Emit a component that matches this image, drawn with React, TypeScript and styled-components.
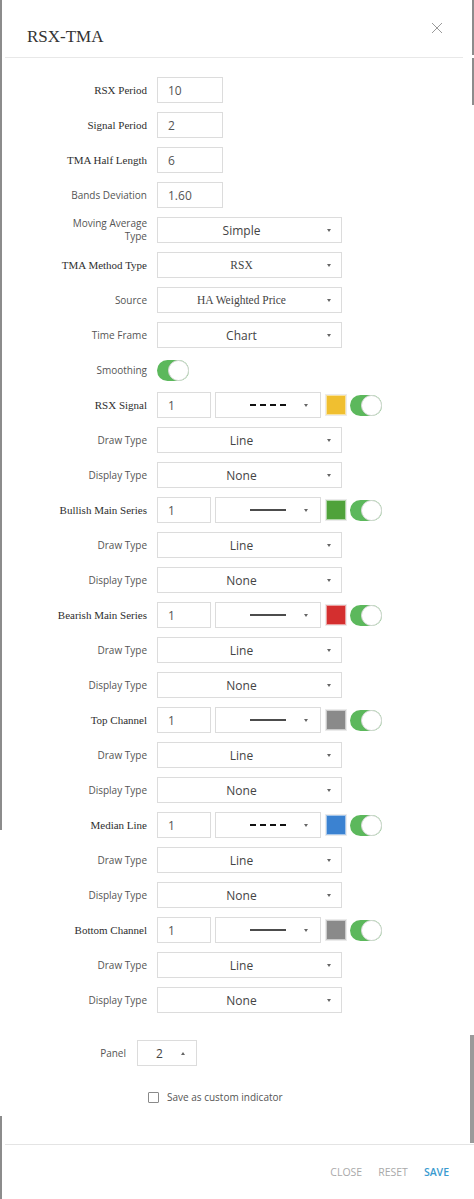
import React from "react";
import styled, { createGlobalStyle } from "styled-components";

const Global = createGlobalStyle`
  html, body { margin: 0; padding: 0; background: #fff; }
  * { box-sizing: border-box; }
`;

const Frame = styled.div`
  position: relative;
  width: 474px;
  height: 1199px;
  background: #fff;
  display: flex;
  flex-direction: column;
  overflow: hidden;
  font-family: "Open Sans", "Liberation Sans", sans-serif;
`;

const EdgeMark = styled.div<{ $side: "left" | "right"; $top: number; $h: number; $w: number; $c: string }>`
  position: absolute;
  ${(p) => (p.$side === "left" ? "left: 0;" : "right: 0;")}
  top: ${(p) => p.$top}px;
  height: ${(p) => p.$h}px;
  width: ${(p) => p.$w}px;
  background: ${(p) => p.$c};
`;

const Header = styled.div`
  display: flex;
  align-items: center;
  justify-content: space-between;
  height: 58px;
  margin: 0 11px 0 5px;
  padding: 16px 20px 0 22px;
  border-bottom: 1px solid #e8e8e8;
`;

const Title = styled.h1`
  margin: 0;
  font-family: "Liberation Serif", "Times New Roman", serif;
  font-weight: normal;
  font-size: 17px;
  color: #333;
`;

const CloseX = styled.button`
  align-self: flex-start;
  margin-top: 6px;
  padding: 0;
  border: 0;
  background: none;
  width: 12px;
  height: 12px;
  display: flex;
  svg { display: block; }
`;

const Body = styled.div`
  flex: 1;
  padding-top: 19px;
  display: flex;
  flex-direction: column;
`;

const FormGrid = styled.div`
  display: grid;
  grid-template-columns: 147px auto;
  column-gap: 10px;
  row-gap: 9px;
  grid-auto-rows: 26px;
`;

const Label = styled.div<{ $serif?: boolean }>`
  display: flex;
  align-items: center;
  justify-content: flex-end;
  text-align: right;
  font-family: ${(p) =>
    p.$serif ? `"Liberation Serif", "Times New Roman", serif` : `"Open Sans", "Liberation Sans", sans-serif`};
  font-size: ${(p) => (p.$serif ? "11px" : "10px")};
  line-height: 13px;
  color: ${(p) => (p.$serif ? "#2e2e2e" : "#555")};
  white-space: pre-line;
`;

const Controls = styled.div`
  display: flex;
  align-items: center;
  gap: 4px;
`;

const NumInput = styled.div<{ $w: number }>`
  width: ${(p) => p.$w}px;
  height: 26px;
  border: 1px solid #dcdcdc;
  display: flex;
  align-items: center;
  padding-left: 10px;
  font-size: 12px;
  color: #555;
`;

const Select = styled.div<{ $w: number; $serif?: boolean; $pr: number; $caretRight: number }>`
  position: relative;
  width: ${(p) => p.$w}px;
  height: 26px;
  border: 1px solid #dcdcdc;
  display: flex;
  align-items: center;
  justify-content: center;
  padding-right: ${(p) => p.$pr}px;
  font-family: ${(p) =>
    p.$serif ? `"Liberation Serif", "Times New Roman", serif` : `"Open Sans", "Liberation Sans", sans-serif`};
  font-size: ${(p) => (p.$serif ? "11.5px" : "12px")};
  color: #444;
  & > i {
    position: absolute;
    right: ${(p) => p.$caretRight}px;
    top: 11px;
    width: 0;
    height: 0;
    border-left: 2.5px solid transparent;
    border-right: 2.5px solid transparent;
    border-top: 3px solid #666;
  }
`;

const Swatch = styled.div<{ $c: string }>`
  width: 20px;
  height: 20px;
  margin-left: 1px;
  background: ${(p) => p.$c};
  border: 1px solid rgba(255, 255, 255, 0.55);
  outline: 1px solid rgba(0, 0, 0, 0.08);
`;

const Toggle = styled.div`
  position: relative;
  width: 32px;
  height: 21px;
  border-radius: 11px;
  background: #5cb85c;
  &::after {
    content: "";
    position: absolute;
    right: 0;
    top: 0;
    width: 21px;
    height: 21px;
    border-radius: 50%;
    background: #fff;
    border: 1px solid #d9d9d9;
    box-sizing: border-box;
  }
`;

const PanelRow = styled.div`
  margin-top: 27px;
  display: grid;
  grid-template-columns: 126px 60px;
  column-gap: 11px;
  height: 26px;
`;

const PanelInput = styled.div`
  position: relative;
  height: 26px;
  border: 1px solid #dcdcdc;
  display: flex;
  align-items: center;
  padding-left: 18px;
  font-size: 12px;
  color: #444;
  & > i {
    position: absolute;
    right: 11px;
    top: 11px;
    width: 0;
    height: 0;
    border-left: 2.5px solid transparent;
    border-right: 2.5px solid transparent;
    border-bottom: 3px solid #666;
  }
`;

const CheckRow = styled.label`
  margin-top: 24px;
  padding-left: 148px;
  display: flex;
  align-items: center;
  gap: 8px;
  font-size: 10px;
  color: #555;
`;

const CheckBox = styled.span`
  width: 11px;
  height: 11px;
  border: 1px solid #8a8a8a;
  border-radius: 1px;
  background: #fff;
`;

const Footer = styled.div`
  height: 55px;
  margin-left: 5px;
  border-top: 1px solid #e4e4e4;
  display: flex;
  align-items: center;
  justify-content: flex-end;
  gap: 16px;
  padding: 0 25px 0 0;
`;

const FooterBtn = styled.button<{ $primary?: boolean }>`
  border: 0;
  background: none;
  padding: 0;
  font-family: "Open Sans", "Liberation Sans", sans-serif;
  font-size: 10.5px;
  font-weight: ${(p) => (p.$primary ? 600 : 400)};
  color: ${(p) => (p.$primary ? "#3a9bd0" : "#a9a9a9")};
`;

const Caret = () => <i />;

const LineStyle = ({ dashed }: { dashed?: boolean }) => (
  <svg width="36" height="4" viewBox="0 0 36 4">
    <line
      x1="0"
      y1="2"
      x2="36"
      y2="2"
      stroke="#111"
      strokeWidth={dashed ? 2 : 1.6}
      strokeDasharray={dashed ? "6 4" : undefined}
    />
  </svg>
);

type SelProps = { value: string; serif?: boolean };
const FullSelect = ({ value, serif }: SelProps) => (
  <Select $w={185} $serif={serif} $pr={16} $caretRight={10}>
    {value}
    <Caret />
  </Select>
);

const series = [
  { name: "RSX Signal", dashed: true, color: "#f0bf30" },
  { name: "Bullish Main Series", dashed: false, color: "#4fa23a" },
  { name: "Bearish Main Series", dashed: false, color: "#d42f2f" },
  { name: "Top Channel", dashed: false, color: "#8a8a8a" },
  { name: "Median Line", dashed: true, color: "#3b82d1" },
  { name: "Bottom Channel", dashed: false, color: "#8a8a8a" },
];

export default function App() {
  return (
    <>
      <Global />
      <Frame>
        <Header>
          <Title>RSX-TMA</Title>
          <CloseX aria-label="close">
            <svg width="12" height="12" viewBox="0 0 12 12">
              <path d="M1 1 L11 11 M11 1 L1 11" stroke="#9a9a9a" strokeWidth="1" />
            </svg>
          </CloseX>
        </Header>
        <Body>
          <FormGrid>
            <Label $serif>RSX Period</Label>
            <Controls>
              <NumInput $w={66}>10</NumInput>
            </Controls>
            <Label $serif>Signal Period</Label>
            <Controls>
              <NumInput $w={66}>2</NumInput>
            </Controls>
            <Label $serif>TMA Half Length</Label>
            <Controls>
              <NumInput $w={66}>6</NumInput>
            </Controls>
            <Label>Bands Deviation</Label>
            <Controls>
              <NumInput $w={66}>1.60</NumInput>
            </Controls>
            <Label>{"Moving Average\nType"}</Label>
            <Controls>
              <FullSelect value="Simple" />
            </Controls>
            <Label $serif>TMA Method Type</Label>
            <Controls>
              <FullSelect value="RSX" serif />
            </Controls>
            <Label>Source</Label>
            <Controls>
              <FullSelect value="HA Weighted Price" serif />
            </Controls>
            <Label>Time Frame</Label>
            <Controls>
              <FullSelect value="Chart" />
            </Controls>
            <Label>Smoothing</Label>
            <Controls>
              <Toggle />
            </Controls>
            {series.map((s) => (
              <React.Fragment key={s.name}>
                <Label $serif>{s.name}</Label>
                <Controls>
                  <NumInput $w={54}>1</NumInput>
                  <Select $w={106} $pr={0} $caretRight={12}>
                    <LineStyle dashed={s.dashed} />
                    <Caret />
                  </Select>
                  <Swatch $c={s.color} />
                  <Toggle />
                </Controls>
                <Label>Draw Type</Label>
                <Controls>
                  <FullSelect value="Line" />
                </Controls>
                <Label>Display Type</Label>
                <Controls>
                  <FullSelect value="None" />
                </Controls>
              </React.Fragment>
            ))}
          </FormGrid>
          <PanelRow>
            <Label>Panel</Label>
            <PanelInput>
              2
              <i />
            </PanelInput>
          </PanelRow>
          <CheckRow>
            <CheckBox />
            Save as custom indicator
          </CheckRow>
        </Body>
        <Footer>
          <FooterBtn>CLOSE</FooterBtn>
          <FooterBtn>RESET</FooterBtn>
          <FooterBtn $primary>SAVE</FooterBtn>
        </Footer>
        <EdgeMark $side="left" $top={0} $h={830} $w={2} $c="#8c8c8c" />
        <EdgeMark $side="left" $top={1116} $h={83} $w={2} $c="#8c8c8c" />
        <EdgeMark $side="right" $top={0} $h={55} $w={2} $c="#8c8c8c" />
        <EdgeMark $side="right" $top={58} $h={47} $w={2} $c="#8c8c8c" />
        <EdgeMark $side="right" $top={1035} $h={108} $w={4} $c="#9a9a9a" />
      </Frame>
    </>
  );
}
